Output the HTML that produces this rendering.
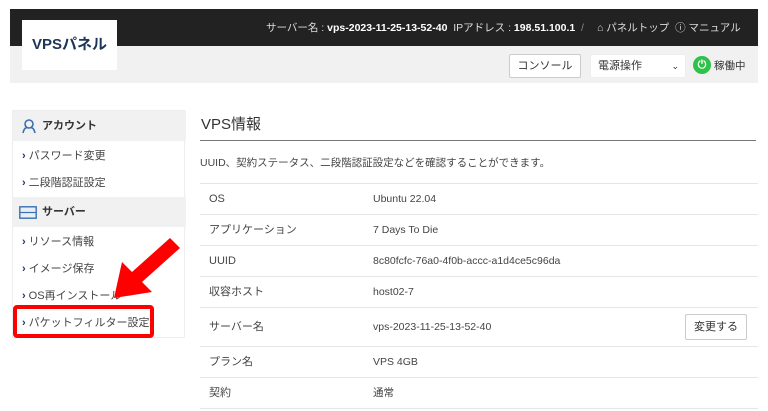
<!DOCTYPE html>
<html><head><meta charset="utf-8"><style>
*{margin:0;padding:0;box-sizing:border-box}
body{width:768px;height:411px;background:#fff;font-family:"Liberation Sans","Noto Sans CJK JP",sans-serif;color:#333;position:relative;overflow:hidden;font-size:11px;line-height:14px}
.abs{position:absolute}
.dark{left:10px;top:9px;width:748px;height:37px;background:#222}
.gray{left:10px;top:46px;width:748px;height:37px;background:#f1f1f1}
.logo{left:22px;top:20px;width:95px;height:50px;background:#fff;font-weight:bold;font-size:15px;color:#1d3557;display:flex;align-items:center;justify-content:center}
.top{top:21px;color:#ddd;font-size:10.5px;white-space:nowrap}
.btn{background:#fff;border:1px solid #ccc;border-radius:2px;display:flex;align-items:center;justify-content:center;font-size:11px;color:#333}
.side{left:12px;top:110px;width:173px;height:228px;border:1px solid #eee}
.sh{position:absolute;left:0;width:173px;height:30px;background:#f1f1f1;font-weight:bold;font-size:11px;padding-left:29px;line-height:30px}
.si{position:absolute;left:9px;font-size:11px;color:#444;line-height:14px}
.si b{color:#1d3557;margin-right:3px}
.row{position:absolute;left:200px;width:558px;border-top:1px solid #e6e6e6}
.lb{position:absolute;left:209px;font-size:11px;color:#444;line-height:14px;height:14px}
.vl{position:absolute;left:373px;font-size:10.5px;color:#444;line-height:14px;height:14px}
</style></head><body>
<div class="abs dark"></div>
<div class="abs gray"></div>
<div class="abs logo">VPSパネル</div>
<div class="abs top" style="left:266px">サーバー名 : <b style="color:#fff">vps-2023-11-25-13-52-40</b>&nbsp; IPアドレス : <b style="color:#fff">198.51.100.1</b></div>
<div class="abs top" style="left:581px;color:#888">/</div>
<div class="abs top" style="left:597px">⌂ パネルトップ&nbsp; ⓘ マニュアル</div>
<div class="abs btn" style="left:509px;top:54px;width:72px;height:24px">コンソール</div>
<div class="abs btn" style="left:590px;top:54px;width:96px;height:24px;justify-content:flex-start;padding-left:7px;border-color:#eee">電源操作<span style="position:absolute;right:6px;font-size:9px">⌄</span></div>
<div class="abs" style="left:693px;top:56px;width:18px;height:18px;border-radius:50%;background:#2ec24a;color:#fff;font-size:11px;text-align:center;line-height:18px;font-weight:bold">⏻</div>
<div class="abs" style="left:714px;top:59px;font-size:10.5px">稼働中</div>

<div class="abs side">
<div class="sh" style="top:0">アカウント</div>
<svg class="abs" style="left:8px;top:7px" width="16" height="16" viewBox="0 0 16 16"><circle cx="8" cy="6" r="4" fill="none" stroke="#3a6fb0" stroke-width="1.6"/><path d="M2 15 Q3 10 6 9.5 M14 15 Q13 10 10 9.5" fill="none" stroke="#3a6fb0" stroke-width="1.6"/></svg>
<div class="si" style="top:38px"><b>›</b>パスワード変更</div>
<div class="si" style="top:65px"><b>›</b>二段階認証設定</div>
<div class="sh" style="top:86px">サーバー</div>
<svg class="abs" style="left:6px;top:95px" width="18" height="13" viewBox="0 0 18 13"><rect x="0.8" y="0.8" width="16.4" height="11.4" fill="#e8eef6" stroke="#3a6fb0" stroke-width="1.4"/><line x1="1" y1="6.5" x2="17" y2="6.5" stroke="#3a6fb0" stroke-width="1.2"/></svg>
<div class="si" style="top:124px"><b>›</b>リソース情報</div>
<div class="si" style="top:151px"><b>›</b>イメージ保存</div>
<div class="si" style="top:178px"><b>›</b>OS再インストール</div>
<div class="si" style="top:205px"><b>›</b>パケットフィルター設定</div>
</div>
<div class="abs" style="left:13px;top:305px;width:141px;height:33px;border:4px solid #f00;border-radius:4px"></div>
<svg class="abs" style="left:110px;top:236px" width="72" height="66" viewBox="0 0 72 66"><path d="M60 2 L70 12 L32 46 L42 56 L4 62 L12 26 L22 36 Z" fill="#f00"/></svg>

<div class="abs" style="left:201px;top:115px;font-size:15px;line-height:20px;color:#333">VPS情報</div>
<div class="abs" style="left:200px;top:140px;width:556px;height:1px;background:#777"></div>
<div class="abs" style="left:200px;top:156px;font-size:10.5px;color:#444">UUID、契約ステータス、二段階認証設定などを確認することができます。</div>
<div class="row" style="top:183px"></div><div class="row" style="top:214px"></div><div class="row" style="top:245px"></div><div class="row" style="top:276px"></div><div class="row" style="top:307px"></div><div class="row" style="top:346px"></div><div class="row" style="top:377px"></div><div class="row" style="top:408px"></div>
<div class="lb" style="top:192px">OS</div><div class="vl" style="top:192px">Ubuntu 22.04</div>
<div class="lb" style="top:223px">アプリケーション</div><div class="vl" style="top:223px">7 Days To Die</div>
<div class="lb" style="top:254px">UUID</div><div class="vl" style="top:254px">8c80fcfc-76a0-4f0b-accc-a1d4ce5c96da</div>
<div class="lb" style="top:285px">収容ホスト</div><div class="vl" style="top:285px">host02-7</div>
<div class="lb" style="top:320px">サーバー名</div><div class="vl" style="top:320px">vps-2023-11-25-13-52-40</div>
<div class="abs btn" style="left:685px;top:314px;width:62px;height:26px">変更する</div>
<div class="lb" style="top:355px">プラン名</div><div class="vl" style="top:355px">VPS 4GB</div>
<div class="lb" style="top:386px">契約</div><div class="vl" style="top:386px">通常</div>
</body></html>
